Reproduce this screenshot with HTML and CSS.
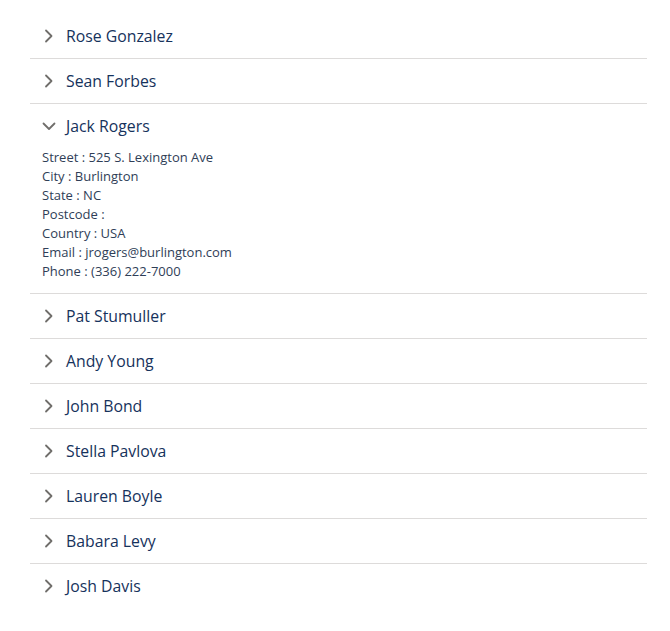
FILE: index.html
```html
<!DOCTYPE html>
<html>
<head>
<meta charset="utf-8">
<link rel="stylesheet" href="styles.css">
</head>
<body>
<ul class="accordion">
  <li class="section"><div class="summary"><svg class="chev" viewBox="0 0 14 14"><path d="M4 1.5 L9.5 7 L4 12.5"/></svg><span class="title">Rose Gonzalez</span></div></li>
  <li class="section"><div class="summary"><svg class="chev" viewBox="0 0 14 14"><path d="M4 1.5 L9.5 7 L4 12.5"/></svg><span class="title">Sean Forbes</span></div></li>
  <li class="section open"><div class="summary"><svg class="chev" viewBox="0 0 14 14"><path d="M1.5 4.5 L7 10 L12.5 4.5"/></svg><span class="title">Jack Rogers</span></div>
    <div class="content">
      <div>Street : 525 S. Lexington Ave</div>
      <div>City : Burlington</div>
      <div>State : NC</div>
      <div>Postcode : </div>
      <div>Country : USA</div>
      <div>Email : jrogers@burlington.com</div>
      <div>Phone : (336) 222-7000</div>
    </div>
  </li>
  <li class="section"><div class="summary"><svg class="chev" viewBox="0 0 14 14"><path d="M4 1.5 L9.5 7 L4 12.5"/></svg><span class="title">Pat Stumuller</span></div></li>
  <li class="section"><div class="summary"><svg class="chev" viewBox="0 0 14 14"><path d="M4 1.5 L9.5 7 L4 12.5"/></svg><span class="title">Andy Young</span></div></li>
  <li class="section"><div class="summary"><svg class="chev" viewBox="0 0 14 14"><path d="M4 1.5 L9.5 7 L4 12.5"/></svg><span class="title">John Bond</span></div></li>
  <li class="section"><div class="summary"><svg class="chev" viewBox="0 0 14 14"><path d="M4 1.5 L9.5 7 L4 12.5"/></svg><span class="title">Stella Pavlova</span></div></li>
  <li class="section"><div class="summary"><svg class="chev" viewBox="0 0 14 14"><path d="M4 1.5 L9.5 7 L4 12.5"/></svg><span class="title">Lauren Boyle</span></div></li>
  <li class="section"><div class="summary"><svg class="chev" viewBox="0 0 14 14"><path d="M4 1.5 L9.5 7 L4 12.5"/></svg><span class="title">Babara Levy</span></div></li>
  <li class="section"><div class="summary"><svg class="chev" viewBox="0 0 14 14"><path d="M4 1.5 L9.5 7 L4 12.5"/></svg><span class="title">Josh Davis</span></div></li>
</ul>
</body>
</html>
```
FILE: styles.css
```css
html, body {
  margin: 0;
  padding: 0;
  background: #ffffff;
}
body {
  font-family: "Open Sans", "Liberation Sans", sans-serif;
  color: #16325c;
}
.accordion {
  list-style: none;
  margin: 14px 23px 0 30px;
  padding: 0;
}
.section {
  padding: 12px;
  border-bottom: 1px solid #dddbda;
}
.section:last-child {
  border-bottom: none;
}
.summary {
  display: flex;
  align-items: center;
  height: 20px;
}
.chev {
  width: 14px;
  height: 14px;
  margin-right: 10px;
  flex: none;
}
.chev path {
  fill: none;
  stroke: #706e6b;
  stroke-width: 1.8;
  stroke-linecap: round;
  stroke-linejoin: round;
}
.title {
  font-size: 15.8px;
  line-height: 20px;
  color: #16325c;
}
.content {
  margin-top: 12px;
  font-size: 13px;
  line-height: 19px;
  color: #2f3e57;
}
```
